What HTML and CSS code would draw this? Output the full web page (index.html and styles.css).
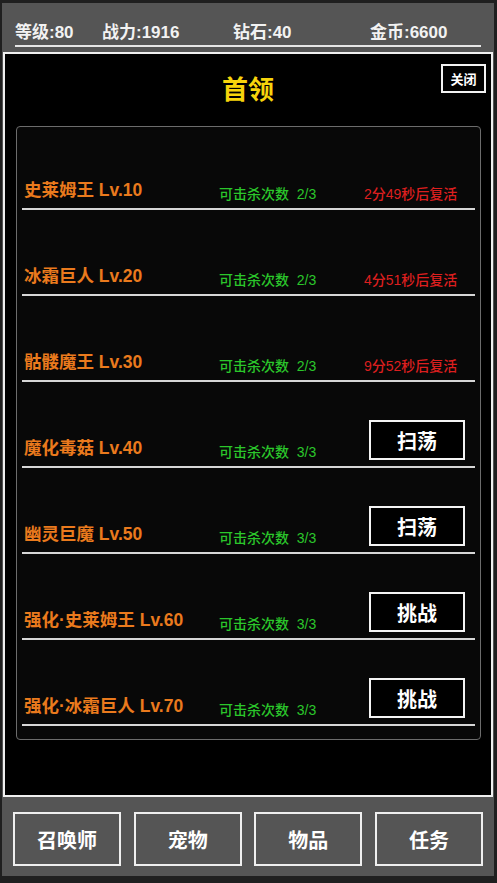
FILE: index.html
```html
<!DOCTYPE html>
<html lang="zh-CN">
<head>
  <meta charset="UTF-8">
  <meta name="viewport" content="width=device-width, initial-scale=1.0">
  <title>首领</title>
  <link rel="stylesheet" href="styles.css">
</head>
<body>

  <div class="screen">
    <div class="topbar">
      <span>等级:80</span>
      <span>战力:1916</span>
      <span>钻石:40</span>
      <span>金币:6600</span>
    </div>

    <div class="panel">
      <div class="panel-head">
        <h2>首领</h2>
        <button class="close-btn">关闭</button>
      </div>

      <div class="boss-list">
        <div class="boss-row">
          <span class="boss-name">史莱姆王 Lv.10</span>
          <span class="kills">可击杀次数  2/3</span>
          <span class="revive">2分49秒后复活</span>
        </div>
        <div class="boss-row">
          <span class="boss-name">冰霜巨人 Lv.20</span>
          <span class="kills">可击杀次数  2/3</span>
          <span class="revive">4分51秒后复活</span>
        </div>
        <div class="boss-row">
          <span class="boss-name">骷髅魔王 Lv.30</span>
          <span class="kills">可击杀次数  2/3</span>
          <span class="revive">9分52秒后复活</span>
        </div>
        <div class="boss-row">
          <span class="boss-name">魔化毒菇 Lv.40</span>
          <span class="kills">可击杀次数  3/3</span>
          <button class="act-btn">扫荡</button>
        </div>
        <div class="boss-row">
          <span class="boss-name">幽灵巨魔 Lv.50</span>
          <span class="kills">可击杀次数  3/3</span>
          <button class="act-btn">扫荡</button>
        </div>
        <div class="boss-row">
          <span class="boss-name">强化·史莱姆王 Lv.60</span>
          <span class="kills">可击杀次数  3/3</span>
          <button class="act-btn">挑战</button>
        </div>
        <div class="boss-row">
          <span class="boss-name">强化·冰霜巨人 Lv.70</span>
          <span class="kills">可击杀次数  3/3</span>
          <button class="act-btn">挑战</button>
        </div>
      </div>
    </div>

    <div class="nav">
      <button class="nav-btn">召唤师</button>
      <button class="nav-btn">宠物</button>
      <button class="nav-btn">物品</button>
      <button class="nav-btn">任务</button>
    </div>
  </div>

</body>
</html>
```

FILE: styles.css
```css
body {
  margin: 0;
  padding: 3px 2px 0 2px;
  background-color: #1f1f1f;
  font-family: 'Liberation Sans', 'Noto Sans CJK SC', sans-serif;
  font-weight: bold;
  height: 880px;
  overflow: hidden;
}

.screen {
  width: 492px;
  height: 873px;
  background-color: #555;
  display: flex;
  flex-direction: column;
}

.topbar {
  display: grid;
  grid-template-columns: 87px 131px 137px auto;
  margin: 0 13px 5px 13px;
  padding: 21px 0 3px 0;
  border-bottom: 2px solid #e6e6e6;
  color: #f2f2f2;
  font-size: 17px;
  line-height: 18px;
}

.panel {
  margin: 0 1px;
  height: 741px;
  border: 2px solid #f0f0f0;
  background-color: #000;
  display: flex;
  flex-direction: column;
}

.panel-head {
  height: 72px;
  display: grid;
  grid-template-columns: 1fr auto 1fr;
}

.panel-head h2 {
  grid-column: 2;
  margin: 21px 0 0 0;
  color: #f7d40c;
  font-size: 26px;
  line-height: 30px;
}

.close-btn {
  grid-column: 3;
  justify-self: end;
  align-self: start;
  margin: 10px 5px 0 0;
  width: 45px;
  height: 29px;
  padding: 0;
  background: #000;
  border: 2px solid #f2f2f2;
  color: #fff;
  font-family: inherit;
  font-weight: bold;
  font-size: 13px;
}

.boss-list {
  margin: 0 10px 0 11px;
  height: 612px;
  border: 1px solid #6c6c6c;
  border-radius: 4px;
  background-color: #080808;
}

.boss-row {
  margin: 0 5px;
  border-bottom: 2px solid #d6d6d6;
  padding-left: 2px;
  display: grid;
  grid-template-columns: 195px 145px 1fr;
  align-items: end;
  box-sizing: border-box;
  height: 86px;
}

.boss-row:first-child {
  height: 83px;
}

.boss-name {
  color: #ea7a1d;
  font-size: 17.5px;
  line-height: 20px;
  margin-bottom: 8px;
  white-space: nowrap;
}

/* counters and timers use a lighter weight */
.kills {
  color: #2bc62b;
  font-size: 14px;
  font-weight: 500;
  line-height: 18px;
  margin-bottom: 5px;
  white-space: pre;
}

.revive {
  color: #dc1f1f;
  font-size: 14px;
  font-weight: 500;
  line-height: 18px;
  margin-bottom: 5px;
  white-space: nowrap;
}

.act-btn {
  margin: 0 0 6px 5px;
  width: 96px;
  height: 40px;
  padding: 0;
  background: #000;
  border: 2px solid #f4f4f4;
  color: #fff;
  font-family: inherit;
  font-weight: bold;
  font-size: 20px;
}

.nav {
  display: flex;
  justify-content: space-between;
  padding: 15px 11px 0 11px;
}

.nav-btn {
  width: 108px;
  height: 54px;
  padding: 0;
  background-color: #555;
  border: 2px solid #efefef;
  color: #fff;
  font-family: inherit;
  font-weight: bold;
  font-size: 20px;
}
```
